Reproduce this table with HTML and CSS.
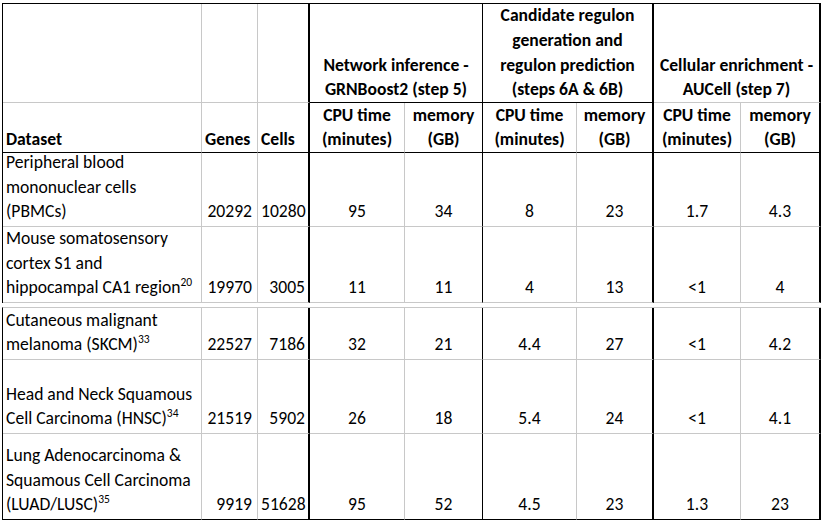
FILE: index.html
```html
<!DOCTYPE html>
<html lang="en">
<head>
<meta charset="utf-8">
<title>Runtime table</title>
<link rel="stylesheet" href="styles.css">
</head>
<body>
<div class="sheet">
  <div class="tbl tbl-a">
    <div class="row">
      <div class="c"></div>
      <div class="c"></div>
      <div class="c rb2"></div>
      <div class="c span2 ctr bold rb bb"><div>Network inference -<br>GRNBoost2 (step 5)</div></div>
      <div class="c span2 ctr bold rb2 bb"><div>Candidate regulon<br>generation and<br>regulon prediction<br>(steps 6A &amp; 6B)</div></div>
      <div class="c span2 ctr bold rb2"><div>Cellular enrichment -<br>AUCell (step 7)</div></div>
    </div>

    <div class="row">
      <div class="c bold bb"><div>Dataset</div></div>
      <div class="c bold bb"><div>Genes</div></div>
      <div class="c bold bb rb2"><div>Cells</div></div>
      <div class="c ctr bold bb"><div>CPU time<br>(minutes)</div></div>
      <div class="c ctr bold bb rb"><div>memory<br>(GB)</div></div>
      <div class="c ctr bold bb"><div>CPU time<br>(minutes)</div></div>
      <div class="c ctr bold bb rb2"><div>memory<br>(GB)</div></div>
      <div class="c ctr bold bb"><div>CPU time<br>(minutes)</div></div>
      <div class="c ctr bold bb rb2"><div>memory<br>(GB)</div></div>
    </div>

    <div class="row row-data">
      <div class="c"><div>Peripheral blood<br>mononuclear cells<br>(PBMCs)</div></div>
      <div class="c num"><div>20292</div></div>
      <div class="c num num-cells rb2"><div>10280</div></div>
      <div class="c ctr"><div>95</div></div>
      <div class="c ctr rb"><div>34</div></div>
      <div class="c ctr"><div>8</div></div>
      <div class="c ctr rb2"><div>23</div></div>
      <div class="c ctr"><div>1.7</div></div>
      <div class="c ctr rb2"><div>4.3</div></div>
    </div>

    <div class="row row-data">
      <div class="c"><div>Mouse somatosensory<br>cortex S1 and<br>hippocampal CA1 region<sup class="sup">20</sup></div></div>
      <div class="c num"><div>19970</div></div>
      <div class="c num num-cells rb2"><div>3005</div></div>
      <div class="c ctr"><div>11</div></div>
      <div class="c ctr rb"><div>11</div></div>
      <div class="c ctr"><div>4</div></div>
      <div class="c ctr rb2"><div>13</div></div>
      <div class="c ctr"><div>&lt;1</div></div>
      <div class="c ctr rb2"><div>4</div></div>
    </div>
  </div>

  <div class="tbl tbl-b">
    <div class="row row-data">
      <div class="c"><div>Cutaneous malignant<br>melanoma (SKCM)<sup class="sup">33</sup></div></div>
      <div class="c num"><div>22527</div></div>
      <div class="c num num-cells rb2"><div>7186</div></div>
      <div class="c ctr"><div>32</div></div>
      <div class="c ctr rb"><div>21</div></div>
      <div class="c ctr"><div>4.4</div></div>
      <div class="c ctr rb2"><div>27</div></div>
      <div class="c ctr"><div>&lt;1</div></div>
      <div class="c ctr rb2"><div>4.2</div></div>
    </div>

    <div class="row row-data">
      <div class="c"><div>Head and Neck Squamous<br>Cell Carcinoma (HNSC)<sup class="sup">34</sup></div></div>
      <div class="c num"><div>21519</div></div>
      <div class="c num num-cells rb2"><div>5902</div></div>
      <div class="c ctr"><div>26</div></div>
      <div class="c ctr rb"><div>18</div></div>
      <div class="c ctr"><div>5.4</div></div>
      <div class="c ctr rb2"><div>24</div></div>
      <div class="c ctr"><div>&lt;1</div></div>
      <div class="c ctr rb2"><div>4.1</div></div>
    </div>

    <div class="row row-data row-last">
      <div class="c"><div>Lung Adenocarcinoma &amp;<br>Squamous Cell Carcinoma<br>(LUAD/LUSC)<sup class="sup">35</sup></div></div>
      <div class="c num"><div>9919</div></div>
      <div class="c num num-cells rb2"><div>51628</div></div>
      <div class="c ctr"><div>95</div></div>
      <div class="c ctr rb"><div>52</div></div>
      <div class="c ctr"><div>4.5</div></div>
      <div class="c ctr rb2"><div>23</div></div>
      <div class="c ctr"><div>1.3</div></div>
      <div class="c ctr rb2"><div>23</div></div>
    </div>
  </div>
</div>
</body>
</html>
```
FILE: styles.css
```css
html, body {
  margin: 0;
  padding: 0;
  background: #ffffff;
}

.sheet {
  display: flex;
  flex-direction: column;
  padding: 3px 0 0 2px;
  gap: 4px;
  font-family: "Carlito", "Calibri", "Lato", sans-serif;
  font-size: 17.6px;
  line-height: 24.7px;
  color: #000000;
}

.tbl {
  display: grid;
  grid-template-columns: 199px 56px 52px 95px 78px 94px 77px 87px 80px;
  width: 819px;
  box-sizing: border-box;
  border-left: 1px solid #000000;
}

.tbl-a {
  grid-template-rows: 99px 50px 74px 76px;
  border-top: 1px solid #000000;
}

.tbl-b {
  grid-template-rows: 52px 74px 86px;
  border-top: 1px solid #c8c8c8;
}

.row {
  display: contents;
}

.c {
  box-sizing: border-box;
  display: flex;
  flex-direction: column;
  justify-content: flex-end;
  padding: 0 3px;
  border-right: 1px solid #c8c8c8;
  border-bottom: 1px solid #c8c8c8;
  white-space: nowrap;
  text-align: left;
}

.row-data .c {
  padding-bottom: 2px;
}

.row-last .c {
  border-bottom-color: #000000;
}

.span2 { grid-column: span 2; }
.bold { font-weight: bold; }
.ctr { text-align: center; }
.num { text-align: right; padding-right: 5px; }
.num-cells { padding-right: 3px; }

.rb { border-right: 1px solid #000000; }
.rb2 { border-right: 2px solid #000000; }
.bb { border-bottom: 1px solid #000000; }

.sup {
  font-size: 11.5px;
  line-height: 0;
  vertical-align: 7px;
}
```
